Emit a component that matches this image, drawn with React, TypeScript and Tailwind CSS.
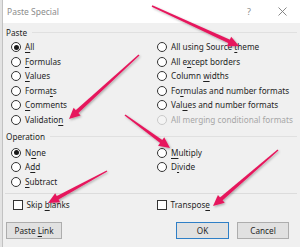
import React from "react";

type Opt = { label: string; u: number; checked?: boolean; disabled?: boolean };

const pasteLeft: Opt[] = [
  { label: "All", u: 0, checked: true },
  { label: "Formulas", u: 0 },
  { label: "Values", u: 0 },
  { label: "Formats", u: 5 },
  { label: "Comments", u: 0 },
  { label: "Validation", u: 9 },
];

const pasteRight: Opt[] = [
  { label: "All using Source theme", u: 17 },
  { label: "All except borders", u: 5 },
  { label: "Column widths", u: 7 },
  { label: "Formulas and number formats", u: 2 },
  { label: "Values and number formats", u: 3 },
  { label: "All merging conditional formats", u: -1, disabled: true },
];

const opLeft: Opt[] = [
  { label: "None", u: 1, checked: true },
  { label: "Add", u: 1 },
  { label: "Subtract", u: 0 },
];

const opRight: Opt[] = [
  { label: "Multiply", u: 0 },
  { label: "Divide", u: 1 },
];

// start x,y -> tip x,y
const arrows = [
  [152, 6, 239, 46],
  [139, 55, 69, 119],
  [125, 115, 170, 148],
  [107, 171, 48, 203],
  [278, 150, 213, 206],
];

function Label({ label, u }: { label: string; u: number }) {
  if (u < 0) return <span>{label}</span>;
  return (
    <span className="whitespace-nowrap">
      {label.slice(0, u)}
      <span className="underline underline-offset-[1.5px]">{label[u]}</span>
      {label.slice(u + 1)}
    </span>
  );
}

function Radio({ checked, disabled }: { checked?: boolean; disabled?: boolean }) {
  return (
    <span
      className={`w-[10px] h-[10px] rounded-full border shrink-0 flex items-center justify-center ${
        disabled ? "border-[#cacaca] bg-[#f4f4f4]" : "border-[#333] bg-white"
      }`}
    >
      {checked && <span className="w-[5px] h-[5px] rounded-full bg-[#1a1a1a]" />}
    </span>
  );
}

function RadioRow({ o }: { o: Opt }) {
  return (
    <div
      className={`h-[14.5px] flex items-center gap-[4px] ${
        o.disabled ? "text-[#a6a6a6]" : ""
      }`}
    >
      <Radio checked={o.checked} disabled={o.disabled} />
      <Label label={o.label} u={o.u} />
    </div>
  );
}

function Check({ label, u }: { label: string; u: number }) {
  return (
    <div className="flex items-center gap-[3.5px]">
      <span className="w-[10px] h-[10px] border border-[#333] bg-white shrink-0" />
      <Label label={label} u={u} />
    </div>
  );
}

function Arrow({ a }: { a: number[] }) {
  const [x1, y1, x2, y2] = a;
  const dx = x2 - x1;
  const dy = y2 - y1;
  const len = Math.hypot(dx, dy);
  const ux = dx / len;
  const uy = dy / len;
  const px = -uy;
  const py = ux;
  const hl = 11;
  const hw = 5.2;
  const bx = x2 - ux * hl;
  const by = y2 - uy * hl;
  const shaft = [
    [x1 + px * 0.7, y1 + py * 0.7],
    [bx + ux + px * 1.9, by + uy + py * 1.9],
    [bx + ux - px * 1.9, by + uy - py * 1.9],
    [x1 - px * 0.7, y1 - py * 0.7],
  ]
    .map((p) => p.join(","))
    .join(" ");
  const head = `${x2},${y2} ${bx + px * hw},${by + py * hw} ${bx - px * hw},${by - py * hw}`;
  return (
    <g filter="url(#shadow)">
      <polygon points={shaft} fill="#e6195d" />
      <polygon points={head} fill="#e6195d" />
    </g>
  );
}

export default function App() {
  return (
    <div className="relative w-[300px] h-[247px] overflow-hidden flex bg-[#f0f0f0] font-['Noto_Sans',sans-serif] text-[8.2px] leading-[12px] text-[#1f1f1f]">
      <div className="w-[2px] bg-[#e3e3e3]" />
      <div className="w-px bg-[#c2c2c2]" />

      <div className="flex-1 flex flex-col">
        {/* Title bar */}
        <div className="h-[23px] bg-white flex items-center pl-[4px] pr-[13px]">
          <span className="text-[8.5px] text-[#8c8c8c]">Paste Special</span>
          <span className="ml-auto mr-[27px] text-[9px] text-[#8c8c8c]">?</span>
          <svg width="9" height="9" viewBox="0 0 9 9">
            <path d="M0.5 0.5 L8.5 8.5 M8.5 0.5 L0.5 8.5" stroke="#7a7a7a" strokeWidth="0.9" />
          </svg>
        </div>

        {/* Paste */}
        <div className="mt-[3px] h-[14px] flex items-center pl-[3px] pr-[3px]">
          <span>Paste</span>
          <div className="flex-1 h-px bg-[#e0e0e0] ml-[5px] -mt-[1px]" />
        </div>
        <div className="flex pl-[8px]">
          <div className="w-[146px] flex flex-col">
            {pasteLeft.map((o) => (
              <RadioRow key={o.label} o={o} />
            ))}
          </div>
          <div className="flex flex-col">
            {pasteRight.map((o) => (
              <RadioRow key={o.label} o={o} />
            ))}
          </div>
        </div>

        {/* Operation */}
        <div className="mt-[3px] h-[14px] flex items-center pl-[3px] pr-[3px]">
          <span>Operation</span>
          <div className="flex-1 h-px bg-[#e0e0e0] ml-[5px] -mt-[1px]" />
        </div>
        <div className="mt-[1.5px] flex pl-[8px]">
          <div className="w-[146px] flex flex-col">
            {opLeft.map((o) => (
              <RadioRow key={o.label} o={o} />
            ))}
          </div>
          <div className="flex flex-col">
            {opRight.map((o) => (
              <RadioRow key={o.label} o={o} />
            ))}
          </div>
        </div>

        <div className="mt-[3.5px] h-px bg-[#dcdcdc] ml-[2px] mr-[3px]" />

        {/* Checkboxes */}
        <div className="mt-[4.5px] h-[14px] flex items-center pl-[10px]">
          <div className="w-[144px]">
            <Check label="Skip blanks" u={5} />
          </div>
          <Check label="Transpose" u={8} />
        </div>

        {/* Buttons */}
        <div className="mt-[10px] flex pl-[3px] pr-[11px]">
          <button className="w-[56px] h-[17px] bg-[#e1e1e1] border border-[#adadad] flex items-center justify-center">
            <Label label="Paste Link" u={6} />
          </button>
          <button className="ml-auto w-[53px] h-[17px] bg-[#e1e1e1] border border-[#2f7fc6] flex items-center justify-center">
            OK
          </button>
          <button className="ml-[8px] w-[52px] h-[17px] bg-[#e1e1e1] border border-[#adadad] flex items-center justify-center">
            Cancel
          </button>
        </div>
      </div>

      <svg
        className="absolute inset-0 pointer-events-none"
        width="300"
        height="247"
        viewBox="0 0 300 247"
      >
        <defs>
          <filter id="shadow" x="-10%" y="-10%" width="130%" height="130%">
            <feDropShadow dx="1" dy="1.2" stdDeviation="0.9" floodColor="#000" floodOpacity="0.3" />
          </filter>
        </defs>
        {arrows.map((a, i) => (
          <Arrow key={i} a={a} />
        ))}
      </svg>
    </div>
  );
}
